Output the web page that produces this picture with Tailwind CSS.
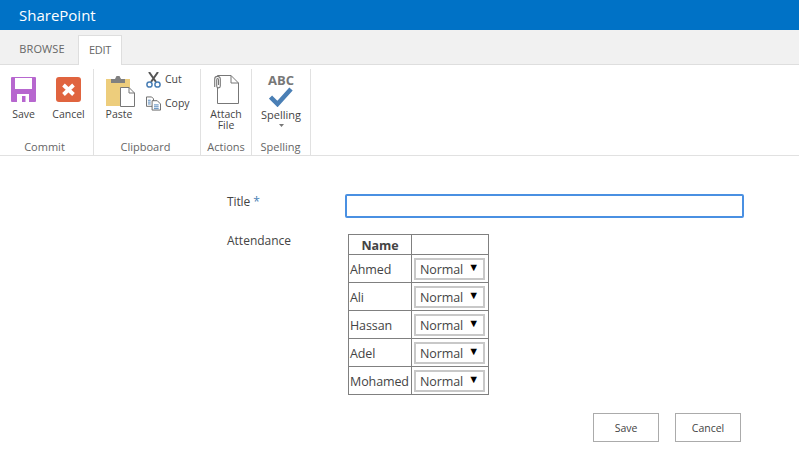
<!DOCTYPE html>
<html>
<head>
<meta charset="utf-8">
<script src="https://cdn.jsdelivr.net/npm/@tailwindcss/browser@4"></script>
</head>
<body class="bg-white font-['Open_Sans','Noto_Sans',sans-serif] text-[#444] w-[799px] h-[465px] overflow-hidden">
<header class="h-[30px] bg-[#0072c6] pl-[19px] flex items-center text-white text-[15px] leading-none">SharePoint</header>

<nav class="h-[35px] bg-[#f1f1f1] border-b border-[#dedede] flex items-end pl-[8px] text-[11px] text-[#666]">
  <div class="w-[70px] h-[30px] flex items-center justify-center tracking-[0.1px] pr-[2px]">BROWSE</div>
  <div class="w-[44px] h-[30px] -mb-px bg-white border border-b-0 border-[#dedede] flex items-center justify-center tracking-[-0.3px]">EDIT</div>
</nav>

<section class="h-[91px] border-b border-[#e1e1e1] flex text-[#444] text-[10.5px]">
  <div class="w-[94px] mt-[4px] border-r border-[#e1e1e1] flex flex-col">
    <div class="flex-1 flex pl-[1px]">
      <div class="w-[45px] flex flex-col items-center">
        <svg class="mt-[8px]" width="25" height="25" viewBox="0 0 25 25"><rect width="25" height="25" rx="1" fill="#b767cf"/><path d="M4 1H21V12H4Z" fill="#fff"/><path d="M6 17H18V25H6Z" fill="#fff"/><path d="M11 19H14.500V25H11Z" fill="#b767cf"/></svg>
        <span class="mt-[5px] leading-[14px]">Save</span>
      </div>
      <div class="w-[45px] flex flex-col items-center">
        <svg class="mt-[8px]" width="25" height="25" viewBox="0 0 25 25"><rect width="25" height="25" rx="3" fill="#e0643f"/><path d="M7.500 8L17.500 17.500M17.500 8L7.500 17.500" stroke="#fff" stroke-width="3.800"/></svg>
        <span class="mt-[5px] leading-[14px]">Cancel</span>
      </div>
    </div>
    <div class="h-[16px] text-center leading-[16px] text-[#666] -mt-[1px] pr-[4px] text-[11px]">Commit</div>
  </div>

  <div class="w-[107px] mt-[4px] border-r border-[#e1e1e1] flex flex-col">
    <div class="flex-1 flex">
      <div class="w-[50px] flex flex-col items-center">
        <svg class="mt-[7px] ml-[3px]" width="29" height="31" viewBox="0 0 29 31"><path d="M0 3H24V30H0Z" fill="#edcd7c"/><path d="M5 3H9L10.500 0H13.500L15 3H19V7H5Z" fill="#808080"/><path d="M14.500 11.500H23L28.500 17V30.500H14.500Z" fill="#fff" stroke="#777"/><path d="M23 11.500V17H28.500" fill="none" stroke="#777"/></svg>
        <span class="leading-[14px]">Paste</span>
      </div>
      <div class="flex flex-col pt-[2px] ml-[2px]">
        <div class="flex items-center gap-[4px] h-[17px]">
          <svg width="15" height="16" viewBox="0 0 15 16"><path d="M3 0L10 10M12 0L5 10" stroke="#555" stroke-width="2" fill="none"/><circle cx="3.500" cy="12.500" r="2.600" fill="none" stroke="#4a7fb5" stroke-width="1.500"/><circle cx="11.500" cy="12.500" r="2.600" fill="none" stroke="#4a7fb5" stroke-width="1.500"/></svg>
          <span>Cut</span>
        </div>
        <div class="flex items-center gap-[4px] h-[17px] mt-[7px]">
          <svg width="15" height="15" viewBox="0 0 16 15"><path d="M.5.5H6L8 2.500V10.500H.5Z" fill="#fff" stroke="#666"/><path d="M6.500 4.500H12L15.500 8V14.500H6.500Z" fill="#fff" stroke="#666"/><path d="M2 4H5M2 6H5M2 8H5M8.500 9H13.500M8.500 11H13.500M8.500 13H13.500" stroke="#4a7fb5"/></svg>
          <span>Copy</span>
        </div>
      </div>
    </div>
    <div class="h-[16px] text-center leading-[16px] text-[#666] -mt-[1px] pr-[3px] text-[11px]">Clipboard</div>
  </div>

  <div class="w-[51px] mt-[4px] border-r border-[#e1e1e1] flex flex-col">
    <div class="flex-1 flex flex-col items-center">
      <svg class="mt-[6px]" width="25" height="29" viewBox="0 0 25 29"><path d="M3.500 .5H17L24.500 8V28.500H3.500Z" fill="#fff" stroke="#777"/><path d="M17 .5V8H24.500" fill="none" stroke="#777"/><path d="M.7 12V4C.7 .5 6.300 .5 6.300 4V11C6.300 13.500 2.700 13.500 2.700 11V5C2.700 3 4.500 3 4.500 5V10" fill="#fff" stroke="#777" stroke-width="1.100"/></svg>
      <span class="mt-[5px] leading-[11px] text-center">Attach<br>File</span>
    </div>
    <div class="h-[16px] text-center leading-[16px] text-[#666] -mt-[1px] text-[11px]">Actions</div>
  </div>

  <div class="w-[59px] mt-[4px] border-r border-[#e1e1e1] flex flex-col">
    <div class="flex-1 flex flex-col items-center">
      <span class="mt-[4px] text-[13px] leading-[15px] font-bold text-[#777]">ABC</span>
      <svg class="-mt-[1px]" width="24" height="20" viewBox="0 0 24 20"><path d="M1.500 10L8.500 17L22 2" fill="none" stroke="#4a7fb5" stroke-width="4.500"/></svg>
      <span class="mt-[1px] leading-[14px] text-[11px]">Spelling</span>
      <svg class="mt-[2px]" width="5" height="3" viewBox="0 0 5 3"><path d="M0 0H5L2.500 3Z" fill="#777"/></svg>
    </div>
    <div class="h-[16px] text-center leading-[16px] text-[#666] -mt-[1px] pr-[1px] text-[11px]">Spelling</div>
  </div>
</section>

<main class="pl-[227px] pt-[38px] text-[12px]">
  <div class="flex h-[40px]">
    <label class="w-[118px] leading-[16px] tracking-[-0.1px]">Title <span class="text-[#4a7fb5]">*</span></label>
    <input type="text" class="w-[399px] h-[24px] rounded-[2px] border-2 border-[#4a90e2] outline-none">
  </div>
  <div class="flex">
    <label class="w-[121px] -mt-[1px] leading-[16px]">Attendance</label>
    <table class="border-collapse border border-[#808080] w-[141px] h-[161px] text-[12.500px] tracking-[-0.1px] table-fixed">
      <thead>
        <tr class="h-[20px]">
          <th class="w-[63px] border border-[#808080] font-bold text-center p-0 pt-[3px] leading-none">Name</th>
          <th class="border border-[#808080] p-0"></th>
        </tr>
      </thead>
      <tbody>
        <tr class="h-[28px]">
          <td class="border border-[#808080] p-0 pl-[1px] pt-[4px]">Ahmed</td>
          <td class="border border-[#808080] p-0 pl-[2px]"><div class="relative w-[71px] h-[22px]"><select class="appearance-none w-full h-full border-2 border-[#c8c8c8] pl-[4px] pt-[1px] outline-none"><option>Normal</option></select><span class="absolute right-[6px] top-[1px] text-[11px] text-black">▼</span></div></td>
        </tr>
        <tr class="h-[28px]">
          <td class="border border-[#808080] p-0 pl-[1px] pt-[4px]">Ali</td>
          <td class="border border-[#808080] p-0 pl-[2px]"><div class="relative w-[71px] h-[22px]"><select class="appearance-none w-full h-full border-2 border-[#c8c8c8] pl-[4px] pt-[1px] outline-none"><option>Normal</option></select><span class="absolute right-[6px] top-[1px] text-[11px] text-black">▼</span></div></td>
        </tr>
        <tr class="h-[28px]">
          <td class="border border-[#808080] p-0 pl-[1px] pt-[4px]">Hassan</td>
          <td class="border border-[#808080] p-0 pl-[2px]"><div class="relative w-[71px] h-[22px]"><select class="appearance-none w-full h-full border-2 border-[#c8c8c8] pl-[4px] pt-[1px] outline-none"><option>Normal</option></select><span class="absolute right-[6px] top-[1px] text-[11px] text-black">▼</span></div></td>
        </tr>
        <tr class="h-[28px]">
          <td class="border border-[#808080] p-0 pl-[1px] pt-[4px]">Adel</td>
          <td class="border border-[#808080] p-0 pl-[2px]"><div class="relative w-[71px] h-[22px]"><select class="appearance-none w-full h-full border-2 border-[#c8c8c8] pl-[4px] pt-[1px] outline-none"><option>Normal</option></select><span class="absolute right-[6px] top-[1px] text-[11px] text-black">▼</span></div></td>
        </tr>
        <tr class="h-[28px]">
          <td class="border border-[#808080] p-0 pl-[1px] pt-[4px]">Mohamed</td>
          <td class="border border-[#808080] p-0 pl-[2px]"><div class="relative w-[71px] h-[22px]"><select class="appearance-none w-full h-full border-2 border-[#c8c8c8] pl-[4px] pt-[1px] outline-none"><option>Normal</option></select><span class="absolute right-[6px] top-[1px] text-[11px] text-black">▼</span></div></td>
        </tr>
      </tbody>
    </table>
  </div>
  <div class="flex gap-[16px] ml-[366px] mt-[18px] text-[10.500px]">
    <button class="w-[66px] h-[29px] border border-[#ababab] pt-[3px]">Save</button>
    <button class="w-[66px] h-[29px] border border-[#ababab] pt-[3px]">Cancel</button>
  </div>
</main>
</body>
</html>
